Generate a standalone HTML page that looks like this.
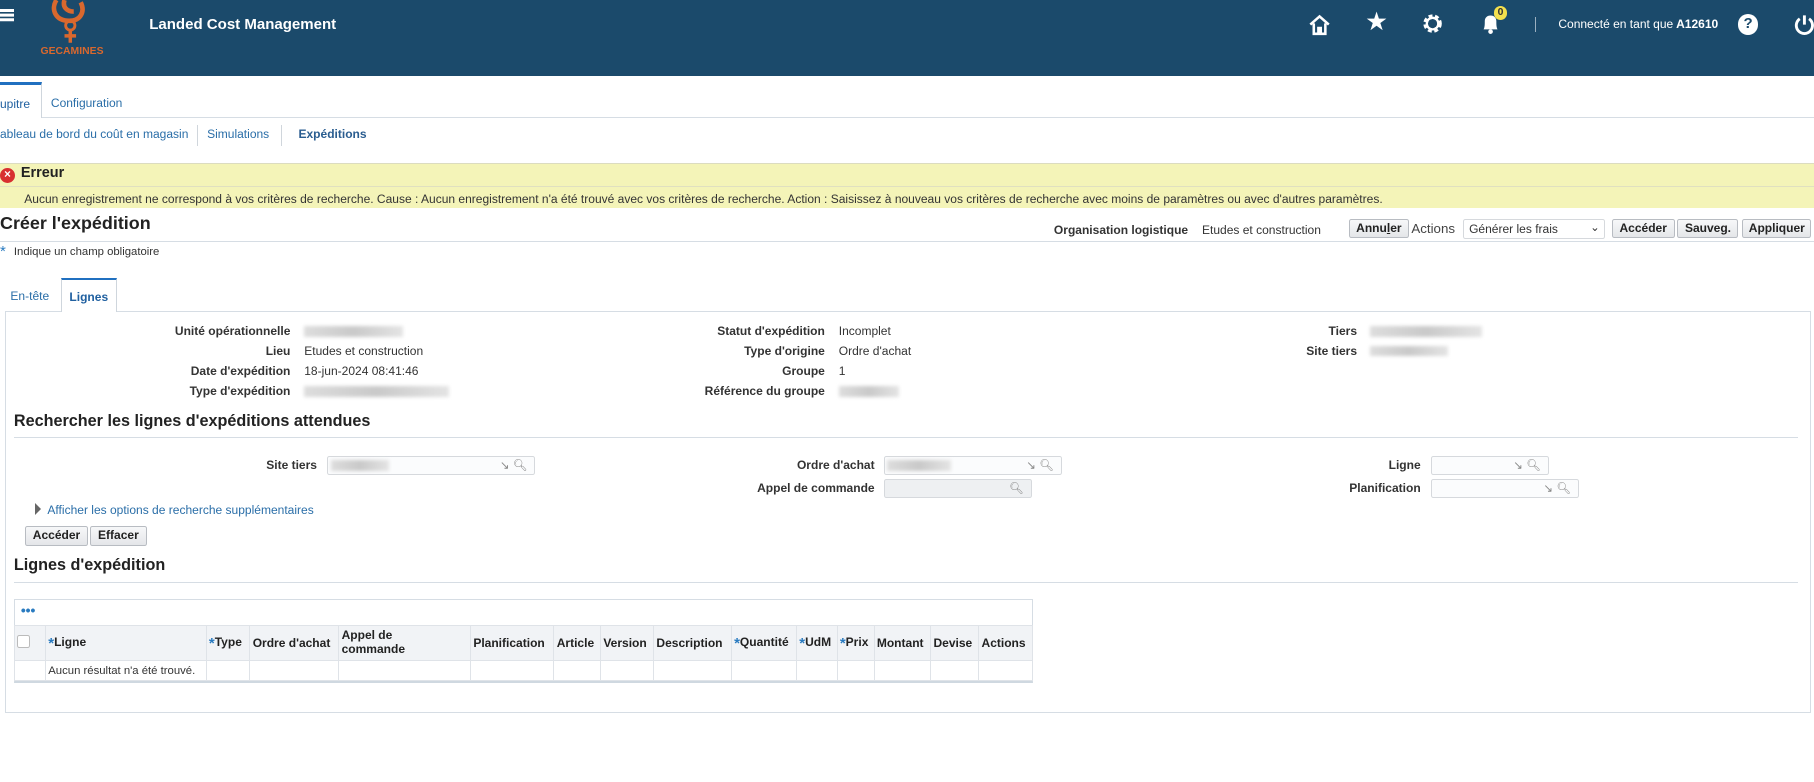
<!DOCTYPE html>
<html><head><meta charset="utf-8"><style>
html,body{margin:0;padding:0;width:1814px;height:782px;overflow:hidden;background:#fff}
#w{zoom:1.15689;position:relative;width:1568px;height:676px;font-family:"Liberation Sans",Arial,sans-serif;font-size:10.4px;color:#333}
.a{position:absolute;white-space:nowrap}
.hdr{position:absolute;left:0;top:0;width:1568px;height:66px;background:#1b4a6b}
.w{color:#fff}
.b{font-weight:bold}
.lbl{position:absolute;white-space:nowrap;text-align:right;font-weight:bold;color:#333}
.btn{position:absolute;height:15px;border:1px solid #b8bcc2;background:linear-gradient(#f7f8f9,#e4e6e9);font-weight:bold;color:#222;font-size:10.4px;line-height:15px;text-align:center;border-radius:2px}
.inp{position:absolute;height:15px;border:1px solid #d6d9dd;background:#fbfcfd;border-radius:2px}
.inp.dis{background:#eef0f2}
.blur{position:absolute;height:9px;background:linear-gradient(90deg,#ddd,#c9c9c9,#e4e4e4);filter:blur(1.5px)}
.hl{position:absolute;height:1px;background:#d6dde4}
table{border-collapse:collapse}
td,th{border:1px solid #dfe3e8;padding:0 2px;font-size:10.4px}
th{background:#f1f3f6;text-align:left;color:#222;height:30px}
.st{color:#2a7bc0;font-size:13px;vertical-align:top}
</style></head><body><div id="w">
<div class="hdr"></div>
<div class="a" style="left:0;top:8px;width:12px;height:2px;background:#fff;box-shadow:0 4px 0 #fff,0 8px 0 #fff"></div>
<svg class="a" style="left:40px;top:0" width="50" height="40" viewBox="0 0 50 40"><path d="M9 0 C4 8 8 18 20 18 C30 18 34 10 30 2 M16 0 C14 6 18 10 24 10" stroke="#d9682e" stroke-width="4" fill="none"/><circle cx="21" cy="22" r="4" stroke="#d9682e" stroke-width="2.5" fill="none"/><path d="M21 26 V37 M16 31 H26" stroke="#d9682e" stroke-width="3"/></svg>
<div class="a b" style="left:35px;top:40px;font-size:9px;color:#d9682e">GECAMINES</div>
<div class="a b w" style="left:129px;top:14px;font-size:13px">Landed Cost Management</div>
<svg class="a" style="left:1131px;top:11px" width="20" height="20" viewBox="0 0 20 20"><path d="M2 10 L10 3 L18 10 M5 9 V18 H9 V13 H11 V18 H15 V9" stroke="#fff" stroke-width="2.2" fill="none"/></svg>
<div class="a w" style="left:1180px;top:6px;font-size:22px">★</div>
<svg class="a" style="left:1228px;top:10px" width="20" height="20" viewBox="0 0 20 20"><circle cx="10" cy="10" r="6" stroke="#fff" stroke-width="4" stroke-dasharray="3 2" fill="none"/><circle cx="10" cy="10" r="5" stroke="#fff" stroke-width="2" fill="none"/></svg>
<svg class="a" style="left:1278px;top:10px" width="20" height="20" viewBox="0 0 20 20"><path d="M4 15 C5 13 5 11 5 8 C5 5 7 3 10 3 C13 3 15 5 15 8 C15 11 15 13 16 15 Z" fill="#fff"/><circle cx="10" cy="17" r="2" fill="#fff"/></svg>
<div class="a" style="left:1291px;top:5px;width:12px;height:12px;border-radius:6px;background:#f4e04d;color:#333;font-size:9px;font-weight:bold;text-align:center;line-height:12px">0</div>
<div class="a" style="left:1327px;top:15px;width:1px;height:13px;background:#9bb0c0"></div>
<div class="a b w" style="left:1347px;top:15px;font-size:10.4px"><span style="font-weight:normal">Connecté en tant que</span> A12610</div>
<div class="a" style="left:1502px;top:12px;width:18px;height:18px;border-radius:9px;background:#fff;color:#1b4a6b;font-weight:bold;font-size:13px;text-align:center;line-height:18px">?</div>
<svg class="a" style="left:1551px;top:11px" width="17" height="20" viewBox="0 0 17 20"><path d="M5 5 A7 7 0 1 0 13 5 M9 2 V10" stroke="#fff" stroke-width="2.5" fill="none"/></svg>

<div class="a" style="left:0;top:71px;width:36px;height:31px;border-top:3px solid #2070c0;border-right:1px solid #cfd6dd;box-sizing:border-box"></div>
<div class="a" style="left:0;top:84px;color:#2060a0">upitre</div>
<div class="a" style="left:44px;top:83px;color:#2a6ea8">Configuration</div>
<div class="hl" style="left:36px;top:101px;width:1533px"></div>
<div class="a" style="left:0;top:110px;color:#2a6ea8">ableau de bord du coût en magasin</div>
<div class="a" style="left:170px;top:108px;width:1px;height:18px;background:#d0d6dc"></div>
<div class="a" style="left:179px;top:110px;color:#2a6ea8">Simulations</div>
<div class="a" style="left:243px;top:108px;width:1px;height:18px;background:#d0d6dc"></div>
<div class="a b" style="left:258px;top:110px;color:#2a5d90">Expéditions</div>

<div class="a" style="left:0;top:141px;width:1568px;height:39px;background:#f4f4b8;border-top:1px solid #dcdcc0;box-sizing:border-box"></div>
<div class="hl" style="left:0;top:161px;width:1568px;background:#e0e0c0"></div>
<div class="a" style="left:0;top:145px;width:13px;height:13px;border-radius:7px;background:#d83030;color:#fff;font-size:10px;font-weight:bold;text-align:center;line-height:13px">×</div>
<div class="a b" style="left:18px;top:143px;font-size:12.5px;color:#222">Erreur</div>
<div class="a" style="left:21px;top:166px;color:#333">Aucun enregistrement ne correspond à vos critères de recherche. Cause : Aucun enregistrement n'a été trouvé avec vos critères de recherche. Action : Saisissez à nouveau vos critères de recherche avec moins de paramètres ou avec d'autres paramètres.</div>

<div class="a b" style="left:0;top:184px;font-size:15.5px;color:#222">Créer l'expédition</div>
<div class="hl" style="left:0;top:208px;width:1568px"></div>
<div class="a b" style="left:911px;top:193px">Organisation logistique</div>
<div class="a" style="left:1039px;top:193px">Etudes et construction</div>
<div class="btn" style="left:1166px;top:189px;width:50px">Annu<u>l</u>er</div>
<div class="a" style="left:1220px;top:191px;font-size:11.5px;color:#444">Actions</div>
<div class="inp" style="left:1265px;top:189px;width:121px;background:#fff;height:16px"><span class="a" style="left:4px;top:2px">Générer les frais</span><span class="a" style="right:4px;top:0;font-size:10px">⌄</span></div>
<div class="btn" style="left:1393px;top:189px;width:53px">Accéder</div>
<div class="btn" style="left:1450px;top:189px;width:51px">Sauveg.</div>
<div class="btn" style="left:1506px;top:189px;width:58px">Appliquer</div>
<div class="a" style="left:0;top:210px;color:#2a7bc0;font-size:13px">*</div>
<div class="a" style="left:12px;top:213px;font-size:9.8px">Indique un champ obligatoire</div>

<div class="a" style="left:9px;top:250px;color:#2a6ea8">En-tête</div>
<div class="a" style="left:53px;top:240px;width:48px;height:30px;border-top:2px solid #2070c0;border-left:1px solid #cfd6dd;border-right:1px solid #cfd6dd;background:#fff;box-sizing:border-box;z-index:2"></div>
<div class="a b" style="left:60px;top:251px;color:#2060a0;z-index:3">Lignes</div>
<div class="a" style="left:4px;top:269px;width:1561px;height:347px;border:1px solid #d6dde4;box-sizing:border-box"></div>

<div class="lbl" style="right:1317px;top:280px">Unité opérationnelle</div><div class="blur" style="left:263px;top:282px;width:85px"></div>
<div class="lbl" style="right:1317px;top:297px">Lieu</div><div class="a" style="left:263px;top:297px">Etudes et construction</div>
<div class="lbl" style="right:1317px;top:315px">Date d'expédition</div><div class="a" style="left:263px;top:315px">18-jun-2024 08:41:46</div>
<div class="lbl" style="right:1317px;top:332px">Type d'expédition</div><div class="blur" style="left:263px;top:334px;width:125px"></div>
<div class="lbl" style="right:855px;top:280px">Statut d'expédition</div><div class="a" style="left:725px;top:280px">Incomplet</div>
<div class="lbl" style="right:855px;top:297px">Type d'origine</div><div class="a" style="left:725px;top:297px">Ordre d'achat</div>
<div class="lbl" style="right:855px;top:315px">Groupe</div><div class="a" style="left:725px;top:315px">1</div>
<div class="lbl" style="right:855px;top:332px">Référence du groupe</div><div class="blur" style="left:725px;top:334px;width:52px"></div>
<div class="lbl" style="right:395px;top:280px">Tiers</div><div class="blur" style="left:1184px;top:282px;width:97px"></div>
<div class="lbl" style="right:395px;top:297px">Site tiers</div><div class="blur" style="left:1184px;top:299px;width:68px"></div>

<div class="a b" style="left:12px;top:356px;font-size:14px;color:#222">Rechercher les lignes d'expéditions attendues</div>
<div class="hl" style="left:12px;top:378px;width:1542px"></div>
<div class="lbl" style="right:1294px;top:396px">Site tiers</div>
<div class="inp" style="left:283px;top:394px;width:178px"><div class="blur" style="left:2px;top:3px;width:50px"></div><span class="a" style="right:6px;top:1px;font-size:10px;color:#888">↘ 🔍︎</span></div>
<div class="lbl" style="right:812px;top:396px">Ordre d'achat</div>
<div class="inp" style="left:764px;top:394px;width:152px"><div class="blur" style="left:2px;top:3px;width:55px"></div><span class="a" style="right:6px;top:1px;font-size:10px;color:#888">↘ 🔍︎</span></div>
<div class="lbl" style="right:812px;top:416px">Appel de commande</div>
<div class="inp dis" style="left:764px;top:414px;width:126px"><span class="a" style="right:6px;top:1px;font-size:10px;color:#888">🔍︎</span></div>
<div class="lbl" style="right:340px;top:396px">Ligne</div>
<div class="inp" style="left:1237px;top:394px;width:100px"><span class="a" style="right:6px;top:1px;font-size:10px;color:#888">↘ 🔍︎</span></div>
<div class="lbl" style="right:340px;top:416px">Planification</div>
<div class="inp" style="left:1237px;top:414px;width:126px"><span class="a" style="right:6px;top:1px;font-size:10px;color:#888">↘ 🔍︎</span></div>
<div class="a" style="left:30px;top:435px;width:0;height:0;border-left:6px solid #666;border-top:6px solid transparent;border-bottom:6px solid transparent"></div>
<div class="a" style="left:41px;top:435px;color:#2a6ea8">Afficher les options de recherche supplémentaires</div>
<div class="btn" style="left:22px;top:455px;width:52px">Accéder</div>
<div class="btn" style="left:78px;top:455px;width:47px">Effacer</div>

<div class="a b" style="left:12px;top:481px;font-size:14px;color:#222">Lignes d'expédition</div>
<div class="hl" style="left:12px;top:503px;width:1542px"></div>
<div class="a" style="left:12px;top:518px;width:881px;height:72px;border:1px solid #d6dde4;box-sizing:border-box;border-bottom:2px solid #cfd8e0"></div>
<div class="a b" style="left:18px;top:520px;color:#2a7bc0;font-size:12px">•••</div>
<table class="a" style="left:12px;top:540px;width:881px">
<tr><th style="width:22px"><span style="display:inline-block;width:9px;height:9px;border:1px solid #bbb;background:#fff;border-radius:2px"></span></th><th style="width:134px"><span class="st">*</span>Ligne</th><th style="width:33px"><span class="st">*</span>Type</th><th style="width:72px">Ordre d'achat</th><th style="width:109px;line-height:12px">Appel de<br>commande</th><th>Planification</th><th>Article</th><th>Version</th><th>Description</th><th><span class="st">*</span>Quantité</th><th><span class="st">*</span>UdM</th><th><span class="st">*</span>Prix</th><th>Montant</th><th>Devise</th><th>Actions</th></tr>
<tr style="height:17px"><td></td><td style="font-size:9.8px">Aucun résultat n'a été trouvé.</td><td></td><td></td><td></td><td></td><td></td><td></td><td></td><td></td><td></td><td></td><td></td><td></td><td></td></tr>
</table>
</div></body></html>
